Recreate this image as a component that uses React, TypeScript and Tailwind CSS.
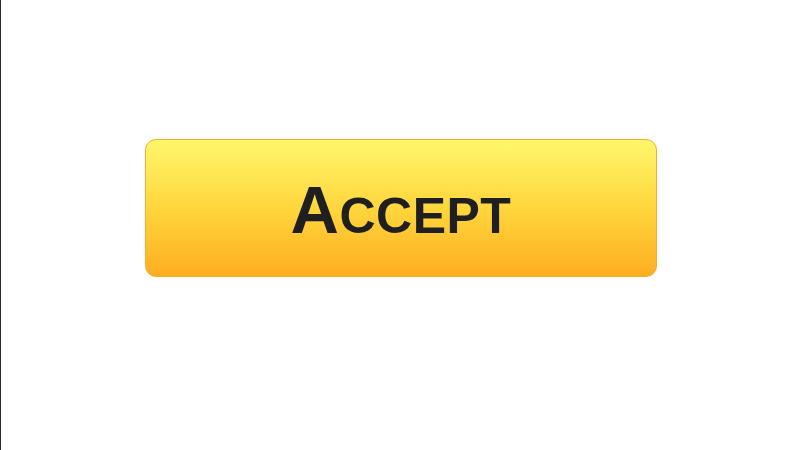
import React from 'react';

export default function App() {
  return (
    <div className="w-[800px] h-[450px] bg-white border-l border-[#2a2a2a] flex flex-col items-center pt-[139px]">
      <button
        className="ml-[1px] w-[512px] h-[138px] rounded-[11px] border-[1.5px] border-[#f6ac2c] bg-gradient-to-b from-[#fff76a] via-[#ffd63c] to-[#fdae20] flex items-center justify-center pt-[3px]"
        style={{ fontFamily: '"Liberation Sans", Arial, sans-serif' }}
      >
        <span className="font-bold text-[#1f1f1f] leading-none tracking-[0.5px]">
          <span className="text-[67px]">A</span>
          <span className="text-[50px]">CCEPT</span>
        </span>
      </button>
    </div>
  );
}
